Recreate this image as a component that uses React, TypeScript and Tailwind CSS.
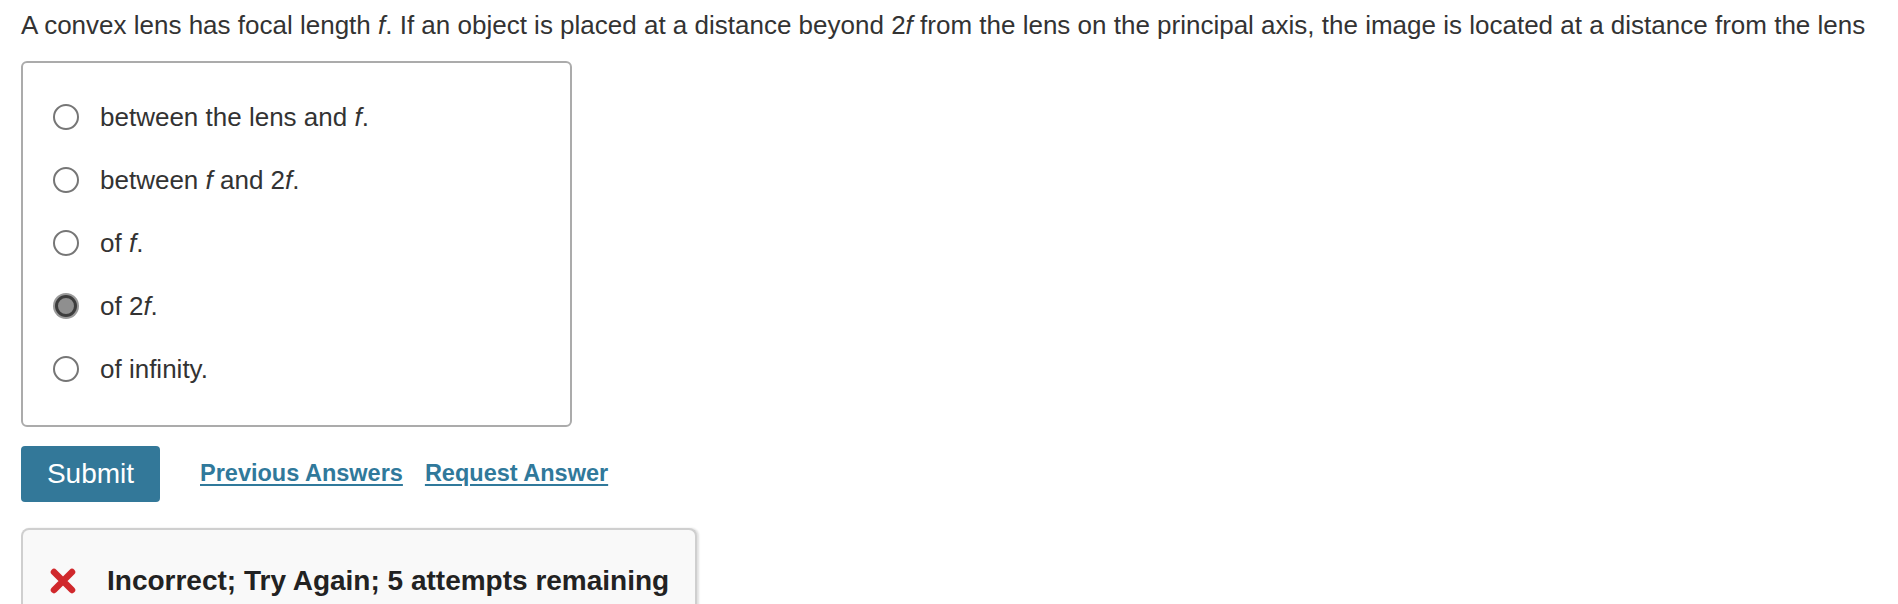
import { useState } from "react"

type Option = {
  id: string
  label: React.ReactNode
}

const options: Option[] = [
  { id: "a", label: <>between the lens and <i>f</i>.</> },
  { id: "b", label: <>between <i>f</i> and 2<i>f</i>.</> },
  { id: "c", label: <>of <i>f</i>.</> },
  { id: "d", label: <>of 2<i>f</i>.</> },
  { id: "e", label: <>of infinity.</> },
]

const Radio = ({ checked }: { checked: boolean }) => {
  if (checked) {
    return (
      <span className="flex h-[26px] w-[26px] shrink-0 items-center justify-center rounded-full bg-[#9a9a9a]">
        <span className="h-[22px] w-[22px] rounded-full border-[3px] border-[#3d3d3d] bg-[#8f8f8f]" />
      </span>
    )
  }
  return (
    <span className="h-[26px] w-[26px] shrink-0 rounded-full border-2 border-[#767676] bg-white" />
  )
}

const RedCross = () => (
  <svg viewBox="0 0 28 28" className="h-[28px] w-[28px] shrink-0">
    <path
      d="M5 5 L23 23 M23 5 L5 23"
      stroke="#d0282c"
      strokeWidth="6.5"
      strokeLinecap="round"
      fill="none"
    />
  </svg>
)

const App = () => {
  const [selected, setSelected] = useState("d")

  return (
    <div className="min-h-[604px] bg-white pl-[21px] pt-[8px] font-['Liberation_Sans',Arial,sans-serif] text-[#333]">
      <p className="whitespace-nowrap text-[26px] leading-[34px]">
        A convex lens has focal length <i>f</i>. If an object is placed at a
        distance beyond 2<i>f</i> from the lens on the principal axis, the image
        is located at a distance from the lens
      </p>

      <div className="mt-[19px] w-[551px] rounded-[6px] border-2 border-[#ababab] pb-[25px] pl-[30px] pt-[22px]">
        {options.map((opt) => (
          <label
            key={opt.id}
            className="flex h-[63px] cursor-pointer items-center gap-[21px]"
            onClick={() => setSelected(opt.id)}
          >
            <Radio checked={selected === opt.id} />
            <span className="text-[26px] leading-none">{opt.label}</span>
          </label>
        ))}
      </div>

      <div className="mt-[19px] flex items-center">
        <button className="h-[56px] w-[139px] rounded-[4px] bg-[#337899] text-[28px] text-white">
          Submit
        </button>
        <div className="ml-[40px] flex gap-[22px] text-[23.5px] font-bold text-[#30799b]">
          <a href="#" className="underline decoration-2 underline-offset-[3px]">
            Previous Answers
          </a>
          <a href="#" className="underline decoration-2 underline-offset-[3px]">
            Request Answer
          </a>
        </div>
      </div>

      <div className="mt-[26px] h-[90px] w-[676px] rounded-t-[8px] border-2 border-b-0 border-[#cfcfcf] bg-[#f9f9f9] shadow-[2px_0_2px_rgba(0,0,0,0.12)]">
        <div className="flex items-center gap-[30px] pl-[26px] pt-[37px]">
          <RedCross />
          <span className="text-[28px] font-bold leading-none text-[#222]">
            Incorrect; Try Again; 5 attempts remaining
          </span>
        </div>
      </div>
    </div>
  )
}

export default App
